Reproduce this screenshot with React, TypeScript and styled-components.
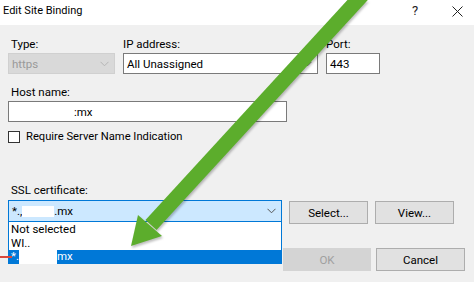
import styled, { createGlobalStyle } from "styled-components";

const GlobalStyle = createGlobalStyle`
  html, body {
    margin: 0;
    padding: 0;
    background: #f0f0f0;
  }
  body {
    font-family: Roboto, "Noto Sans", Arial, sans-serif;
    font-size: 11px;
    line-height: 16px;
    color: #000;
  }
`;

const Window = styled.div`
  position: relative;
  width: 474px;
  height: 282px;
  overflow: hidden;
  background: #f0f0f0;
`;

const TitleBar = styled.div`
  height: 25px;
  background: #fff;
  display: flex;
  align-items: center;
  padding-left: 3px;
`;

const Title = styled.div`
  flex: 1;
  margin-top: -3px;
`;

const TitleButton = styled.div<{ $w: number }>`
  width: ${(p) => p.$w}px;
  display: flex;
  justify-content: center;
  align-items: center;
  margin-top: -3px;
  font-size: 13px;
  color: #222;
`;

const Body = styled.div`
  padding: 11px 0 0 8px;
  display: flex;
  flex-direction: column;
`;

const Row = styled.div<{ $gap?: number; $top?: number; $indent?: number }>`
  display: flex;
  align-items: flex-start;
  gap: ${(p) => p.$gap ?? 0}px;
  margin-top: ${(p) => p.$top ?? 0}px;
  padding-left: ${(p) => p.$indent ?? 0}px;
`;

const Field = styled.div<{ $w: number; $top?: number }>`
  width: ${(p) => p.$w}px;
  margin-top: ${(p) => p.$top ?? 0}px;
  display: flex;
  flex-direction: column;
`;

const Label = styled.div<{ $indent?: number; $top?: number }>`
  height: 16px;
  margin-top: ${(p) => p.$top ?? 0}px;
  padding-left: ${(p) => p.$indent ?? 3}px;
  font-size: 11.5px;
`;

const Box = styled.div<{ $disabled?: boolean }>`
  box-sizing: border-box;
  height: 21px;
  margin-top: 1px;
  border: 1px solid ${(p) => (p.$disabled ? "#d0d0d0" : "#7a7a7a")};
  background: ${(p) => (p.$disabled ? "#d9d9d9" : "#fff")};
  color: ${(p) => (p.$disabled ? "#9a9a9a" : "#000")};
  display: flex;
  align-items: center;
  padding-left: 3px;
  font-size: 11.5px;
`;

const BoxText = styled.span`
  flex: 1;
  display: flex;
  align-items: center;
  white-space: nowrap;
`;

const Chevron = styled.svg`
  width: 9px;
  height: 6px;
  margin-right: 5px;
`;

const Redact = styled.span<{ $w: number; $h?: number }>`
  display: inline-block;
  width: ${(p) => p.$w}px;
  height: ${(p) => p.$h ?? 12}px;
  background: #fff;
`;

const CheckRow = styled.label`
  display: flex;
  align-items: center;
  gap: 6px;
  height: 14px;
  margin-top: 8px;
  font-size: 11.2px;
`;

const CheckBox = styled.span`
  box-sizing: border-box;
  width: 12px;
  height: 12px;
  border: 1px solid #333;
  background: #fff;
`;

const Combo = styled.div`
  box-sizing: border-box;
  width: 274px;
  height: 22px;
  border: 1px solid #0078d7;
  background: #cce8ff;
  display: flex;
  align-items: center;
  padding-left: 3px;
  font-size: 11.5px;
`;

const Button = styled.div<{ $w: number; $disabled?: boolean; $top?: number }>`
  box-sizing: border-box;
  width: ${(p) => p.$w}px;
  height: 23px;
  margin-top: ${(p) => p.$top ?? 0}px;
  display: flex;
  align-items: center;
  justify-content: center;
  background: ${(p) => (p.$disabled ? "#d4d4d4" : "#e1e1e1")};
  border: 1px solid ${(p) => (p.$disabled ? "#d4d4d4" : "#adadad")};
  color: ${(p) => (p.$disabled ? "#a0a0a0" : "#000")};
  font-size: 11.5px;
`;

const DropList = styled.div`
  position: absolute;
  left: 8px;
  top: 222px;
  width: 274px;
  box-sizing: border-box;
  border: 1px solid #0078d7;
  border-top: none;
  background: #fff;
  display: flex;
  flex-direction: column;
  font-size: 11.5px;
`;

const Option = styled.div<{ $selected?: boolean }>`
  height: ${(p) => (p.$selected ? 13 : 14)}px;
  line-height: 13px;
  padding-left: 2px;
  display: flex;
  align-items: center;
  white-space: nowrap;
  background: ${(p) => (p.$selected ? "#0078d7" : "transparent")};
  color: ${(p) => (p.$selected ? "#fff" : "#000")};
`;

const RedMark = styled.div`
  position: absolute;
  left: 0;
  top: 256px;
  width: 12px;
  height: 2px;
  background: #d9473b;
`;

const ArrowLayer = styled.svg`
  position: absolute;
  left: 0;
  top: 0;
  width: 474px;
  height: 282px;
  pointer-events: none;
  filter: drop-shadow(1px 2px 1px rgba(0, 0, 0, 0.25));
`;

function Down({ color = "#555" }: { color?: string }) {
  return (
    <Chevron viewBox="0 0 9 6">
      <path d="M0.5 0.8 L4.5 4.8 L8.5 0.8" fill="none" stroke={color} strokeWidth="1" />
    </Chevron>
  );
}

export default function App() {
  return (
    <>
      <GlobalStyle />
      <Window>
        <TitleBar>
          <Title>Edit Site Binding</Title>
          <TitleButton $w={50}>?</TitleButton>
          <TitleButton $w={34}>
            <svg width="11" height="11" viewBox="0 0 11 11">
              <path d="M0.5 0.5 L10.5 10.5 M10.5 0.5 L0.5 10.5" stroke="#222" strokeWidth="1" />
            </svg>
          </TitleButton>
        </TitleBar>
        <Body>
          <Row $gap={8}>
            <Field $w={107}>
              <Label>Type:</Label>
              <Box $disabled>
                <BoxText>https</BoxText>
                <Down color="#b5b5b5" />
              </Box>
            </Field>
            <Field $w={195}>
              <Label $indent={0}>IP address:</Label>
              <Box>
                <BoxText>All Unassigned</BoxText>
                <Down />
              </Box>
            </Field>
            <Field $w={54}>
              <Label $indent={0}>Port:</Label>
              <Box>
                <BoxText>443</BoxText>
              </Box>
            </Field>
          </Row>
          <Field $w={279} $top={10}>
            <Label>Host name:</Label>
            <Box>
              <BoxText>
                <Redact $w={62} />
                :mx
              </BoxText>
            </Box>
          </Field>
          <CheckRow>
            <CheckBox />
            Require Server Name Indication
          </CheckRow>
          <Label $top={38}>SSL certificate:</Label>
          <Row $gap={7} $top={2}>
            <Combo>
              <BoxText>
                *.,
                <Redact $w={32} $h={11} />
                .mx
              </BoxText>
              <Down />
            </Combo>
            <Button $w={79} $top={1}>Select...</Button>
            <Button $w={79} $top={1}>View...</Button>
          </Row>
          <Row $gap={5} $top={24} $indent={275}>
            <Button $w={88} $disabled>OK</Button>
            <Button $w={89}>Cancel</Button>
          </Row>
        </Body>
        <DropList>
          <Option>Not selected</Option>
          <Option>WI..</Option>
          <Option $selected>
            *.
            <Redact $w={38} $h={15} />
            mx
          </Option>
        </DropList>
        <RedMark />
        <ArrowLayer viewBox="0 0 474 282">
          <line x1="376" y1="-20" x2="151" y2="225" stroke="#5cad2c" strokeWidth="15" />
          <polygon points="138,215 162,236 131,246" fill="#5cad2c" />
        </ArrowLayer>
      </Window>
    </>
  );
}
